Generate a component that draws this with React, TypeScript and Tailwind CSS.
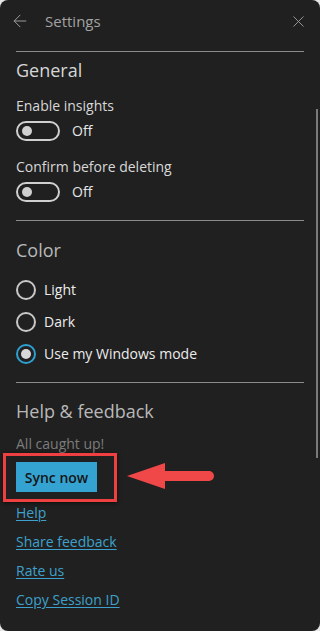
import { ArrowLeft, X } from "lucide-react";

function Toggle() {
  return (
    <div className="flex items-center gap-3 mt-[6px]">
      <div className="w-[44px] h-[20px] rounded-full border-2 border-[#d0d0d0] flex items-center px-[4px]">
        <div className="w-[10px] h-[10px] rounded-full bg-[#d0d0d0]" />
      </div>
      <span className="text-[14px] leading-[18px] text-[#e6e6e6]">Off</span>
    </div>
  );
}

function Radio({ label, checked }: { label: string; checked?: boolean }) {
  return (
    <div className="flex items-center gap-2 h-[20px]">
      <div
        className={`w-[20px] h-[20px] rounded-full border-2 flex items-center justify-center ${
          checked ? "border-[#2f9fd0]" : "border-[#c8c8c8]"
        }`}
      >
        {checked && <div className="w-[10px] h-[10px] rounded-full bg-[#d8d8d8]" />}
      </div>
      <span className="text-[14px] leading-[18px] text-[#ececec]">{label}</span>
    </div>
  );
}

const links = ["Help", "Share feedback", "Rate us", "Copy Session ID"];

export default function App() {
  return (
    <div className="w-[320px] h-[631px] bg-[#e6e6e6]" style={{ fontFamily: '"Open Sans", "Noto Sans", sans-serif' }}>
      <div className="relative w-full h-full bg-[#202020] rounded-[8px] overflow-hidden">
        {/* scrollbar */}
        <div className="absolute right-[2px] top-[109px] w-[2px] h-[349px] bg-[#7a7a7a]" />

        <div className="flex items-center h-[42px] pl-[10px] pr-[12px]">
          <ArrowLeft size={20} strokeWidth={1.2} className="text-[#9a9a9a]" />
          <span className="ml-[15px] text-[15px] leading-[20px] text-[#a3a3a3]">Settings</span>
          <X size={19} strokeWidth={1.2} className="ml-auto text-[#9a9a9a]" />
        </div>

        <div className="mx-[16px] border-t border-[#8c8c8c] mt-[9px]" />

        <div className="px-[16px]">
          <h2 className="text-[18px] text-[#d6d6d6] mt-[6px] leading-[24px]">General</h2>
          <div className="mt-[15px] text-[14px] text-[#d8d8d8] leading-[18px]">Enable insights</div>
          <Toggle />
          <div className="mt-[17px] text-[14px] text-[#d8d8d8] leading-[18px]">Confirm before deleting</div>
          <Toggle />
        </div>

        <div className="mx-[16px] border-t border-[#8c8c8c] mt-[18px]" />

        <div className="px-[16px]">
          <h2 className="text-[18px] text-[#b8b8b8] mt-[17px] leading-[24px]">Color</h2>
          <div className="mt-[18px] flex flex-col gap-[12px]">
            <Radio label="Light" />
            <Radio label="Dark" />
            <Radio label="Use my Windows mode" checked />
          </div>
        </div>

        <div className="mx-[16px] border-t border-[#8c8c8c] mt-[18px]" />

        <div className="px-[16px]">
          <h2 className="text-[18px] text-[#b8b8b8] mt-[16px] leading-[24px]">Help &amp; feedback</h2>
          <div className="mt-[12px] text-[14px] text-[#7c7c7c] leading-[18px]">All caught up!</div>
          <div className="relative mt-[9px] flex items-center">
            <div className="absolute -left-[13px] -top-[9px] w-[114px] h-[49px] border-[3px] border-[#ee4040] shadow-[0_1px_4px_rgba(0,0,0,0.6)]" />
            <button className="w-[81px] h-[30px] bg-[#35a3d2] text-[14px] font-semibold text-[#141414]">
              Sync now
            </button>
            <svg className="absolute left-[111px] top-[-1px]" width="88" height="30" viewBox="0 0 88 30">
              <line x1="30" y1="15" x2="82" y2="15" stroke="#f04848" strokeWidth="10" strokeLinecap="round" />
              <polygon points="0,15 38,2 38,28" fill="#f04848" />
            </svg>
          </div>
          <div className="mt-[12px] flex flex-col gap-[11px]">
            {links.map((l) => (
              <a key={l} className="text-[14px] leading-[18px] text-[#3ea0cc] underline underline-offset-[2px] w-fit">
                {l}
              </a>
            ))}
          </div>
        </div>
      </div>
    </div>
  );
}
